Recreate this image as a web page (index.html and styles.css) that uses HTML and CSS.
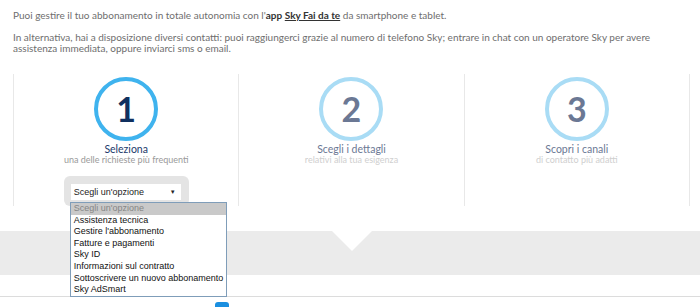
FILE: index.html
```html
<!DOCTYPE html>
<html lang="it">
<head>
<meta charset="utf-8">
<title>Assistenza Sky</title>
<link rel="stylesheet" href="styles.css">
</head>
<body>
<div class="intro">
  <p class="p1">Puoi gestire il tuo abbonamento in totale autonomia con l'<b>app</b> <a class="app-link" href="#">Sky Fai da te</a> da smartphone e tablet.</p>
  <p class="p2">In alternativa, hai a disposizione diversi contatti: puoi raggiungerci grazie al numero di telefono Sky; entrare in chat con un operatore Sky per avere assistenza immediata, oppure inviarci sms o email.</p>
</div>

<div class="steps">
  <div class="step active">
    <div class="circle"><span class="num">1</span></div>
    <div class="title">Seleziona</div>
    <div class="sub">una delle richieste più frequenti</div>
    <div class="select-wrap">
      <div class="select"><span>Scegli un'opzione</span><span class="arrow">▼</span></div>
      <ul class="options">
        <li class="hl">Scegli un'opzione</li>
        <li>Assistenza tecnica</li>
        <li>Gestire l'abbonamento</li>
        <li>Fatture e pagamenti</li>
        <li>Sky ID</li>
        <li>Informazioni sul contratto</li>
        <li>Sottoscrivere un nuovo abbonamento</li>
        <li>Sky AdSmart</li>
      </ul>
    </div>
  </div>
  <div class="step">
    <div class="circle"><span class="num">2</span></div>
    <div class="title">Scegli i dettagli</div>
    <div class="sub">relativi alla tua esigenza</div>
  </div>
  <div class="step">
    <div class="circle"><span class="num">3</span></div>
    <div class="title">Scopri i canali</div>
    <div class="sub">di contatto più adatti</div>
  </div>
</div>

<div class="band"><span class="notch"></span></div>
<div class="footer-line"></div>
<div class="below"><span class="blue-icon"></span></div>
</body>
</html>
```
FILE: styles.css
```css
* { box-sizing: border-box; }
html, body { margin: 0; padding: 0; background: #fff; }
body {
  font-family: Lato, "Open Sans", sans-serif;
  color: #6e6e6e;
  overflow: hidden;
}
.intro { padding: 10px 18px 0 13px; font-size: 10px; line-height: 11px; letter-spacing: 0; }
.intro p { margin: 0; }
.intro .p2 { margin-top: 11px; }
.intro b { color: #333; font-weight: 700; }
.app-link { color: #333; font-weight: 700; text-decoration: underline; }

.steps {
  display: flex;
  margin: 20px 10px 0 13px;
}
.step {
  flex: 1 1 0;
  border-left: 1px solid #e8e8e8;
  display: flex;
  flex-direction: column;
  align-items: center;
  padding-top: 3px;
  height: 132px;
}
.step:last-child { border-right: 1px solid #e8e8e8; }
.circle {
  width: 64px; height: 64px;
  border-radius: 50%;
  border: 4px solid #a9dcf5;
  display: flex; align-items: center; justify-content: center;
}
.num { font-size: 34px; font-weight: 700; color: #6b7894; line-height: 1; }
.active .circle { border-color: #3fb3ee; }
.active .num { color: #10305f; }
.title { margin-top: 3px; font-size: 10.5px; line-height: 11px; color: #6b7894; white-space: nowrap; }
.active .title { color: #1b3a6b; }
.sub { font-size: 9px; line-height: 10px; color: #cfcfcf; white-space: nowrap; }
.active .sub { color: #9a9a9a; }

.select-wrap {
  position: relative;
  margin-top: 11px;
  width: 125px; height: 30px;
  background: #e4e4e4;
  border-radius: 6px;
  padding: 8px 8px 0 7px;
}
.select {
  height: 16px;
  background: #fff;
  display: flex; justify-content: space-between; align-items: center;
  padding: 0 5px 0 3px;
  font-family: "Liberation Sans", Arial, sans-serif;
  font-size: 9px; color: #222;
}
.arrow { font-size: 6px; }
.options {
  position: absolute;
  left: 6px; top: 26px;
  width: 157px;
  margin: 0; padding: 0;
  list-style: none;
  background: #fff;
  border: 1px solid #7f9db9;
  font-family: "Liberation Sans", Arial, sans-serif;
  font-size: 9px; color: #111;
  z-index: 2;
}
.options li { height: 11.6px; line-height: 11.6px; padding-left: 3px; white-space: nowrap; }
.options li.hl { background: #c9c9c9; color: #858585; }

.band {
  position: relative;
  margin-top: 25px;
  height: 44px;
  background: #ebebeb;
}
.notch {
  position: absolute;
  left: 332px; top: 0;
  width: 0; height: 0;
  border-left: 20px solid transparent;
  border-right: 20px solid transparent;
  border-top: 20px solid #fff;
}
.footer-line { margin-top: 21px; height: 1px; background: #dcdcdc; }
.below { padding: 5px 0 0 215px; }
.blue-icon { display: block; width: 14px; height: 10px; background: #1a8fe0; border-radius: 3px; }
```
